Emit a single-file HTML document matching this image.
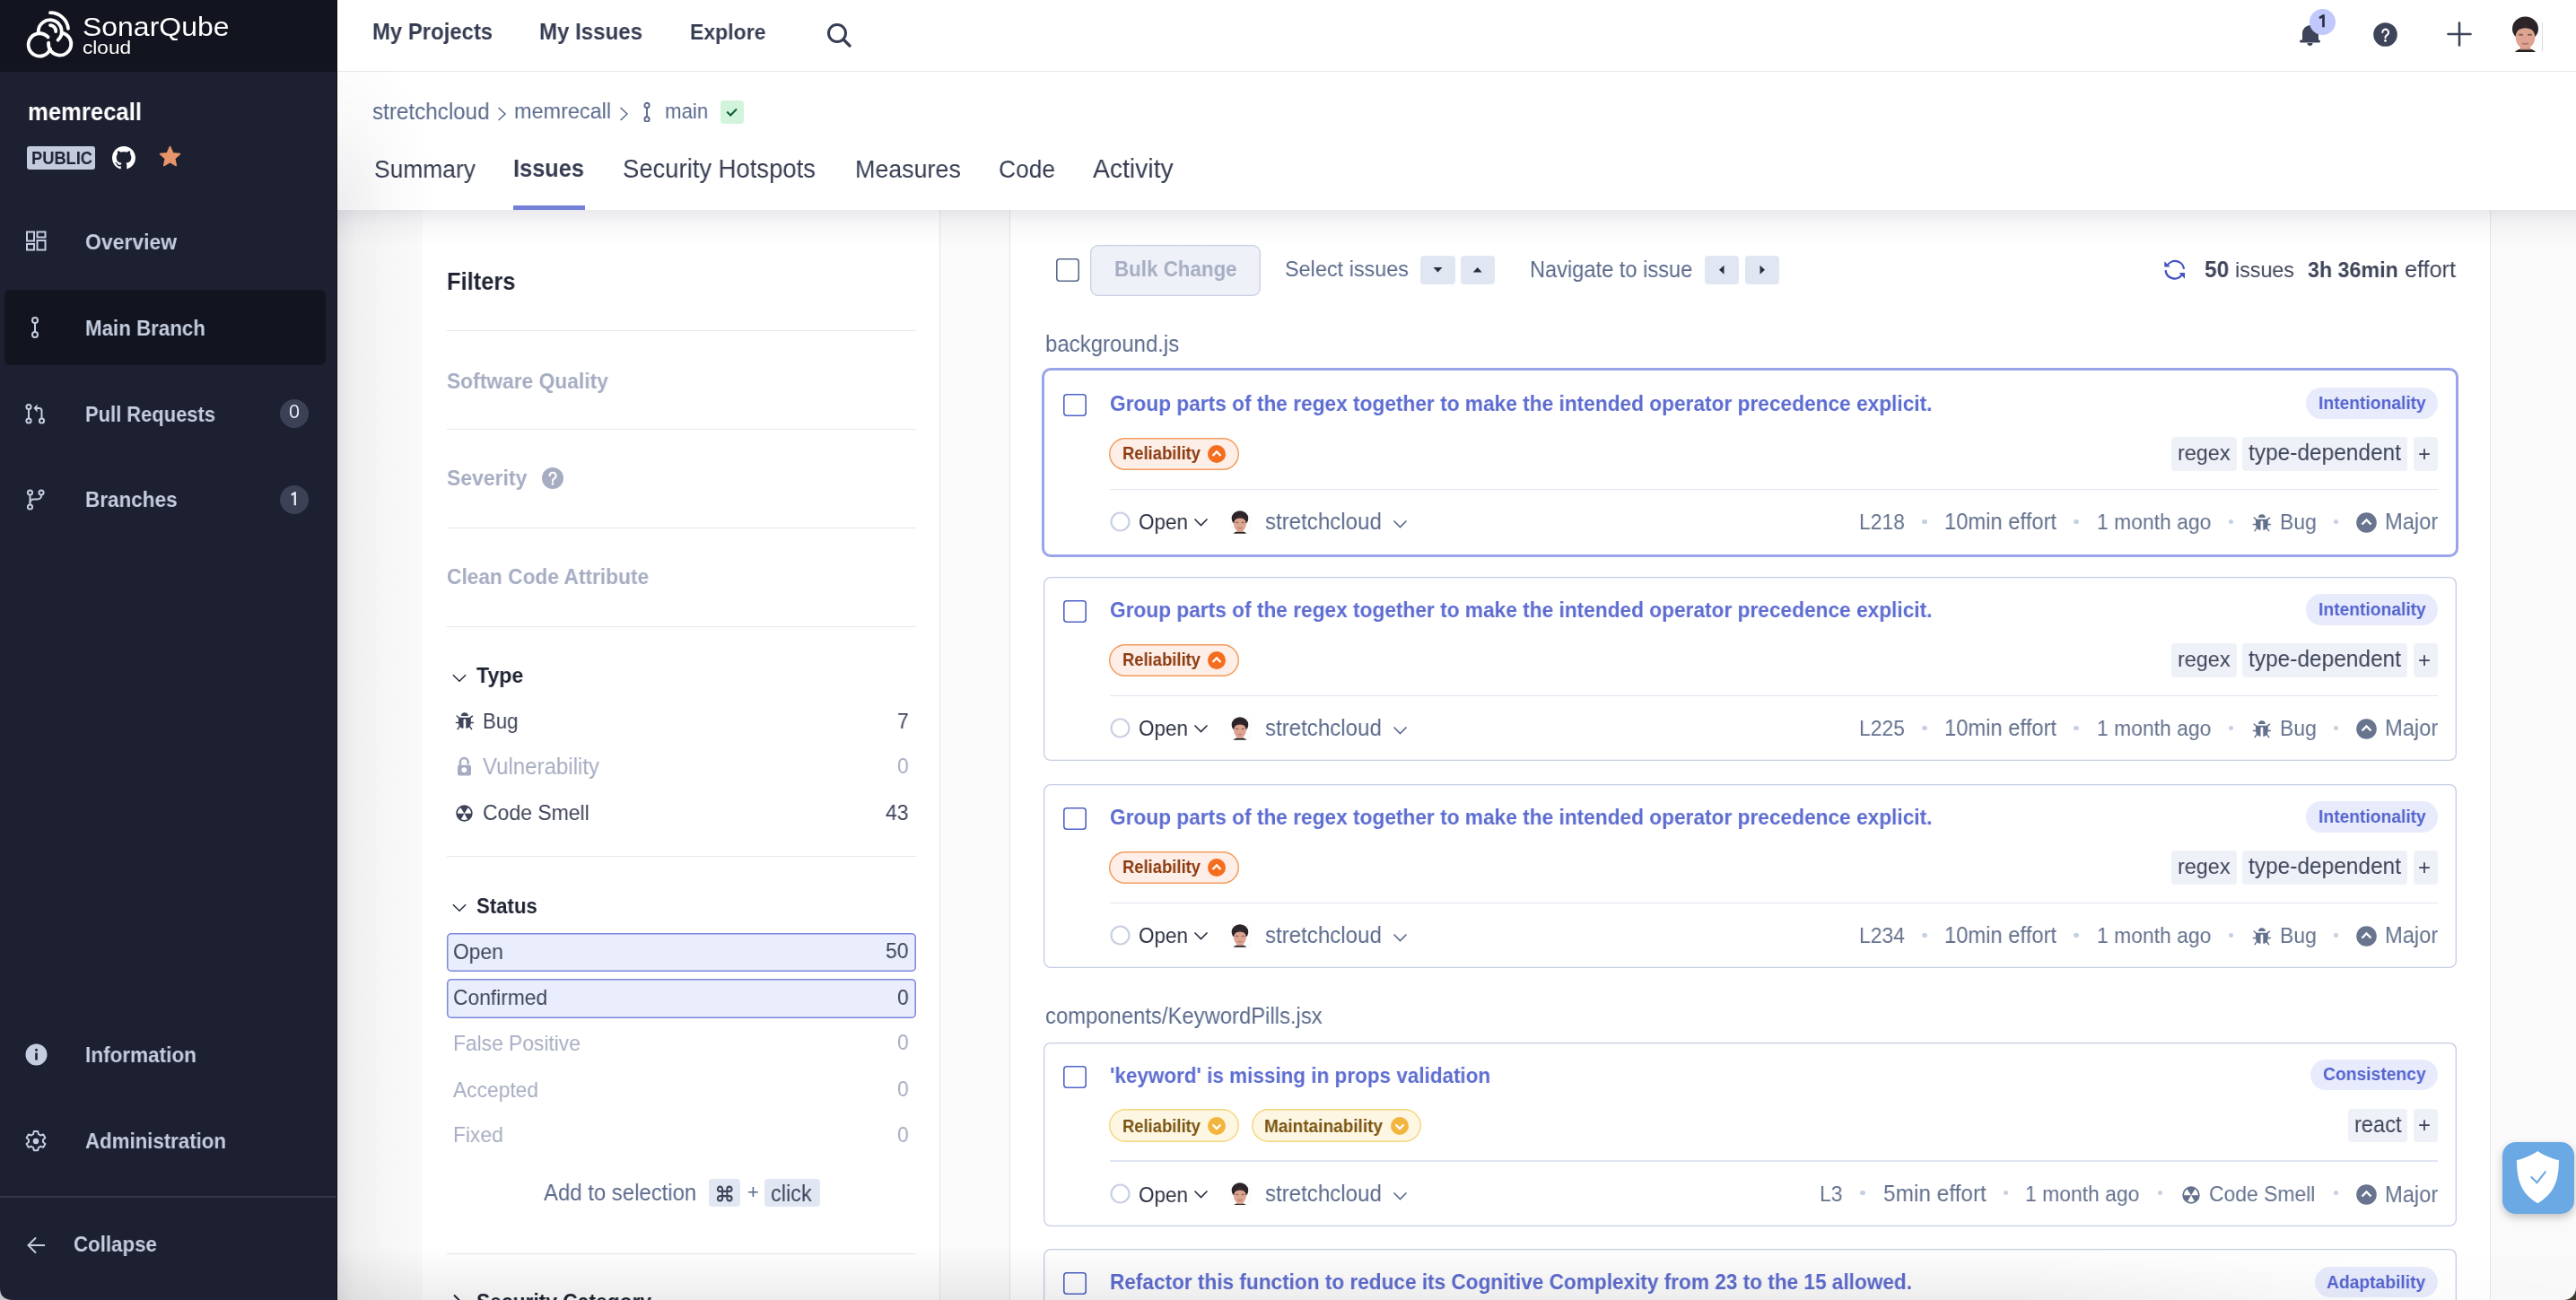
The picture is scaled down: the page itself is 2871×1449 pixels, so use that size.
<!DOCTYPE html>
<html><head><meta charset="utf-8"><style>
html,body{margin:0;padding:0;}
body{width:2871px;height:1449px;position:relative;overflow:hidden;background:#f8f8fa;font-family:"Liberation Sans",sans-serif;}
.t{position:absolute;white-space:nowrap;line-height:1;will-change:transform;}
.b{position:absolute;}
</style></head><body>
<div class="b" style="left:376.00px;top:234.00px;width:2495.00px;height:1215.00px;background:#fafafa;"></div>
<div class="b" style="left:471.00px;top:234.00px;width:576.00px;height:1215.00px;background:#fff;"></div>
<div class="b" style="left:1047.00px;top:234.00px;width:1.00px;height:1215.00px;background:#e1e6f3;"></div>
<div class="b" style="left:1125.00px;top:234.00px;width:1.00px;height:1215.00px;background:#e1e6f3;"></div>
<div class="b" style="left:1126.00px;top:234.00px;width:1649.00px;height:1215.00px;background:#fff;"></div>
<div class="b" style="left:2775.00px;top:234.00px;width:1.00px;height:1215.00px;background:#e1e6f3;"></div>
<div class="b" style="left:376.00px;top:234.00px;width:2495.00px;height:40.00px;background:linear-gradient(to bottom,rgba(10,10,50,0.085),rgba(10,10,50,0.03) 40%,rgba(10,10,50,0));"></div>
<div class="b" style="left:376.00px;top:0.00px;width:2495.00px;height:79.00px;background:#fff;"></div>
<div class="b" style="left:376.00px;top:79.00px;width:2495.00px;height:1.00px;background:#e6e7ea;"></div>
<div class="b" style="left:376.00px;top:80.00px;width:2495.00px;height:154.00px;background:#fff;"></div>
<div class="t" style="left:414.80px;top:22.75px;font-size:25.33px;font-weight:700;color:#363d52;transform:scaleX(0.9434);transform-origin:0.00px 0;">My Projects</div>
<div class="t" style="left:601.00px;top:22.61px;font-size:25.50px;font-weight:700;color:#363d52;transform:scaleX(0.9434);transform-origin:0.00px 0;">My Issues</div>
<div class="t" style="left:768.50px;top:23.54px;font-size:24.41px;font-weight:700;color:#363d52;transform:scaleX(0.9434);transform-origin:0.00px 0;">Explore</div>
<svg class="b" style="left:921.00px;top:25.00px;" width="28.00" height="28.00" viewBox="0 0 28 28"><circle cx="12" cy="12" r="9.5" fill="none" stroke="#363d52" stroke-width="3"/><path d="M19 19 L26 26" stroke="#363d52" stroke-width="3.2" stroke-linecap="round"/></svg>
<svg class="b" style="left:2562.00px;top:24.00px;" width="26.00" height="30.00" viewBox="0 0 26 30"><path d="M4 21 V13 a9 9 0 0 1 18 0 V21 Z" fill="#3e4459"/><rect x="1" y="20.5" width="23" height="3" rx="1.5" fill="#3e4459"/><path d="M9.5 24 h6 a3 3 0 0 1 -6 0z" fill="#3e4459"/></svg>
<div class="b" style="left:2574.00px;top:10.00px;width:29.00px;height:29.00px;background:#c0c8fc;border-radius:50%;"></div>
<svg class="b" style="left:2574.00px;top:10.00px;" width="29.00" height="29.00" viewBox="0 0 29 29"><path d="M11 10.2 L15.5 7.3 V20.2" fill="none" stroke="#2a2f40" stroke-width="2.7" stroke-linejoin="round"/></svg>
<svg class="b" style="left:2644.50px;top:24.80px;" width="27.00" height="27.00" viewBox="0 0 27 27"><circle cx="13.5" cy="13.5" r="13.3" fill="#3e4459"/><path d="M10.3 11 a3.4 3.4 0 1 1 5.3 2.9 c-1.2 .8 -2.1 1.4 -2.1 2.9 v.5" fill="none" stroke="#fff" stroke-width="2.1" stroke-linecap="round"/><circle cx="13.5" cy="20.4" r="1.35" fill="#fff"/></svg>
<svg class="b" style="left:2727.00px;top:24.00px;" width="28.00" height="28.00" viewBox="0 0 28 28"><path d="M14 1.5 V26.5 M1.5 14 H26.5" stroke="#3e4459" stroke-width="2.6" stroke-linecap="round"/></svg>
<svg class="b" style="left:2799.00px;top:18.00px;" width="35.00" height="40.00" viewBox="0 0 35 40"><rect width="35" height="40" fill="#fdfdfd"/><path d="M4 40 Q6 37 11 36.5 L20 36.5 Q25 37 27 40 Z" fill="#222"/><rect x="10" y="31" width="11" height="6.5" fill="#c98f80"/><ellipse cx="15.5" cy="14" rx="14.5" ry="13.5" fill="#2b2428"/><ellipse cx="15.5" cy="23.5" rx="10.8" ry="12.8" fill="#dea391"/><path d="M4.5 21 C4 14 8 10.8 15.5 10.8 C23 10.8 27 14 26.5 21 C25 16 22 13.6 15.5 13.3 C9 13.6 6 16 4.5 21 Z" fill="#2b2428"/><rect x="8" y="19.8" width="5" height="2" rx="1" fill="#7b6650"/><rect x="18" y="19.8" width="5" height="2" rx="1" fill="#7b6650"/><path d="M12 30.3 q3.5 1.5 7 0" stroke="#a87468" stroke-width="1.5" fill="none"/><rect x="34" y="7" width="1" height="32" fill="#dcdcdc"/></svg>
<div class="t" style="left:415.00px;top:111.66px;font-size:25.68px;color:#5b6a8c;transform:scaleX(0.9434);transform-origin:0.00px 0;">stretchcloud</div>
<svg class="b" style="left:553.00px;top:118.50px;" width="12.00" height="16.00" viewBox="0 0 12 16"><path d="M2.6 1 L10 8 L2.6 15" fill="none" stroke="#5b6a8c" stroke-width="1.5"/></svg>
<div class="t" style="left:572.70px;top:112.38px;font-size:24.83px;color:#5b6a8c;transform:scaleX(0.9434);transform-origin:0.00px 0;">memrecall</div>
<svg class="b" style="left:689.00px;top:118.50px;" width="12.00" height="16.00" viewBox="0 0 12 16"><path d="M2.6 1 L10 8 L2.6 15" fill="none" stroke="#5b6a8c" stroke-width="1.5"/></svg>
<svg class="b" style="left:714.00px;top:113.00px;" width="14.00" height="23.00" viewBox="0 0 14 23"><g fill="none" stroke="#5b6a8c" stroke-width="1.9"><circle cx="7" cy="4.4" r="2.6"/><circle cx="7" cy="19.9" r="2.6"/><path d="M7 7 V17.3"/></g></svg>
<div class="t" style="left:740.60px;top:113.39px;font-size:23.64px;color:#5b6a8c;transform:scaleX(0.9434);transform-origin:0.00px 0;">main</div>
<div class="b" style="left:803.00px;top:112.00px;width:25.50px;height:25.60px;background:#d3f4dc;border-radius:4px;"></div>
<svg class="b" style="left:803.00px;top:112.00px;" width="25.50" height="25.60" viewBox="0 0 25.5 25.6"><path d="M7.2 12.6 L11.2 16.5 L18 9.6" fill="none" stroke="#0d6331" stroke-width="2.1"/></svg>
<div class="t" style="left:417.00px;top:174.51px;font-size:27.99px;color:#363d52;transform:scaleX(0.9434);transform-origin:0.00px 0;">Summary</div>
<div class="t" style="left:572.00px;top:175.44px;font-size:26.88px;font-weight:700;color:#363d52;transform:scaleX(0.9434);transform-origin:0.00px 0;">Issues</div>
<div class="t" style="left:694.00px;top:173.58px;font-size:29.09px;color:#363d52;transform:scaleX(0.9434);transform-origin:0.00px 0;">Security Hotspots</div>
<div class="t" style="left:953.00px;top:174.12px;font-size:28.44px;color:#363d52;transform:scaleX(0.9434);transform-origin:0.00px 0;">Measures</div>
<div class="t" style="left:1113.00px;top:174.55px;font-size:27.94px;color:#363d52;transform:scaleX(0.9434);transform-origin:0.00px 0;">Code</div>
<div class="t" style="left:1218.00px;top:172.80px;font-size:30.01px;color:#363d52;transform:scaleX(0.9434);transform-origin:0.00px 0;">Activity</div>
<div class="b" style="left:571.70px;top:229.00px;width:80.30px;height:4.50px;background:#7480d8;"></div>
<div class="b" style="left:0.00px;top:0.00px;width:376.00px;height:80.00px;background:#12151f;"></div>
<div class="b" style="left:0.00px;top:80.00px;width:376.00px;height:1369.00px;background:#1d2030;"></div>
<div class="b" style="left:375.00px;top:0.00px;width:1.00px;height:1449.00px;background:#0b0d14;"></div>
<svg class="b" style="left:25.00px;top:8.00px;" width="65.00" height="62.00" viewBox="0 0 65 62"><g fill="none" stroke="#fff" stroke-width="3.8" stroke-linecap="round"><path d="M28.6 33.4 A12.65 12.65 0 1 0 31 46.6"/><path d="M29.1 39.6 A12.65 12.65 0 1 0 45 28.8"/><path d="M17.8 28.5 A13 13 0 1 1 39.6 36.7"/><path d="M31 20.2 A6.5 6.5 0 0 1 37.2 27.2"/><path d="M31 6.2 A20 20 0 0 1 51 23.8"/></g></svg>
<div class="t" style="left:91.50px;top:14.56px;font-size:29.35px;color:#fff;transform:scaleX(1.0891);transform-origin:0.00px 0;">SonarQube</div>
<div class="t" style="left:91.80px;top:42.82px;font-size:20.17px;color:#fff;transform:scaleX(1.1241);transform-origin:0.00px 0;">cloud</div>
<div class="t" style="left:31.00px;top:111.08px;font-size:27.20px;font-weight:700;color:#fff;transform:scaleX(0.9434);transform-origin:0.00px 0;">memrecall</div>
<div class="b" style="left:30.00px;top:163.00px;width:76.00px;height:26.00px;background:#c3cbdd;border-radius:3px;"></div>
<div class="t" style="left:34.50px;top:166.70px;font-size:19.38px;font-weight:700;color:#1d2030;transform:scaleX(0.9434);transform-origin:0.00px 0;">PUBLIC</div>
<svg class="b" style="left:125.00px;top:163.00px;" width="26.00" height="26.00" viewBox="0 0 16 16"><path fill="#ffffff" d="M8 0C3.58 0 0 3.58 0 8c0 3.54 2.29 6.53 5.47 7.59.4.07.55-.17.55-.38 0-.19-.01-.82-.01-1.49-2.01.37-2.53-.49-2.69-.94-.09-.23-.48-.94-.82-1.13-.28-.15-.68-.52-.01-.53.63-.01 1.08.58 1.23.82.72 1.21 1.87.87 2.33.66.07-.52.28-.87.51-1.07-1.78-.2-3.64-.89-3.64-3.95 0-.87.31-1.59.82-2.15-.08-.2-.36-1.02.08-2.12 0 0 .67-.21 2.2.82.64-.18 1.32-.27 2-.27.68 0 1.36.09 2 .27 1.53-1.04 2.2-.82 2.2-.82.44 1.1.16 1.92.08 2.12.51.56.82 1.27.82 2.15 0 3.07-1.87 3.75-3.65 3.95.29.25.54.73.54 1.48 0 1.07-.01 1.93-.01 2.2 0 .21.15.46.55.38A8.013 8.013 0 0016 8c0-4.42-3.58-8-8-8z"/></svg>
<svg class="b" style="left:177.00px;top:162.00px;" width="25.00" height="25.00" viewBox="0 0 24 24"><path fill="#e8956b" d="M12 1.5 L15.1 8.4 L22.5 9.2 L17 14.2 L18.5 21.6 L12 17.9 L5.5 21.6 L7 14.2 L1.5 9.2 L8.9 8.4Z" stroke="#e8956b" stroke-width="1.5" stroke-linejoin="round"/></svg>
<div class="b" style="left:5.00px;top:323.00px;width:358.00px;height:84.00px;background:#12151f;border-radius:6px;"></div>
<svg class="b" style="left:28.00px;top:257.00px;" width="24.00" height="23.00" viewBox="0 0 24 23"><g fill="none" stroke="#c5cde0" stroke-width="2"><rect x="2" y="1.5" width="8" height="10"/><rect x="13.5" y="1.5" width="9" height="6"/><rect x="2" y="15" width="8" height="6.5"/><rect x="13.5" y="11" width="9" height="10.5"/></g></svg>
<div class="t" style="left:95.00px;top:258.03px;font-size:24.30px;font-weight:700;color:#c5cde0;transform:scaleX(0.9434);transform-origin:0.00px 0;">Overview</div>
<svg class="b" style="left:33.00px;top:353.00px;" width="12.00" height="24.00" viewBox="0 0 12 24"><g fill="none" stroke="#c5cde0" stroke-width="2"><circle cx="6" cy="4" r="3"/><circle cx="6" cy="20" r="3"/><path d="M6 7 V17"/></g></svg>
<div class="t" style="left:95.00px;top:354.56px;font-size:23.67px;font-weight:700;color:#c5cde0;transform:scaleX(0.9434);transform-origin:0.00px 0;">Main Branch</div>
<svg class="b" style="left:27.00px;top:449.00px;" width="26.00" height="25.00" viewBox="0 0 26 25"><g fill="none" stroke="#c5cde0" stroke-width="2"><circle cx="5" cy="4.5" r="2.6"/><circle cx="5" cy="20" r="2.6"/><path d="M5 7.1 V17.4"/><circle cx="19.5" cy="20" r="2.6"/><path d="M19.5 17.4 V9 a3 3 0 0 0 -3 -3 H12.5"/></g><path d="M10.5 6 L14.5 1.5 V10.5Z" fill="#c5cde0"/></svg>
<div class="t" style="left:95.00px;top:450.93px;font-size:23.24px;font-weight:700;color:#c5cde0;transform:scaleX(0.9434);transform-origin:0.00px 0;">Pull Requests</div>
<div class="b" style="left:312.00px;top:445.00px;width:32.00px;height:32.00px;background:#3c4156;border-radius:50%;"></div>
<div class="t" style="left:322.07px;top:449.20px;font-size:21.50px;color:#e6e9f2;">0</div>
<svg class="b" style="left:27.00px;top:544.00px;" width="26.00" height="25.00" viewBox="0 0 26 25"><g fill="none" stroke="#c5cde0" stroke-width="2"><circle cx="6.5" cy="5" r="2.6"/><circle cx="6.5" cy="21" r="2.6"/><path d="M6.5 7.6 V18.4"/><circle cx="19" cy="5" r="2.6"/><path d="M19 7.6 V8.5 a4 4 0 0 1 -4 4 H10.5 a4 4 0 0 0 -4 4"/></g></svg>
<div class="t" style="left:95.00px;top:545.41px;font-size:23.85px;font-weight:700;color:#c5cde0;transform:scaleX(0.9434);transform-origin:0.00px 0;">Branches</div>
<div class="b" style="left:312.00px;top:541.00px;width:32.00px;height:32.00px;background:#3c4156;border-radius:50%;"></div>
<svg class="b" style="left:312.00px;top:541.00px;" width="32.00" height="32.00" viewBox="0 0 32 32"><path d="M12.8 10.8 L16.8 8.2 V22.2" fill="none" stroke="#e6e9f2" stroke-width="2.3" stroke-linejoin="round"/></svg>
<svg class="b" style="left:28.00px;top:1163.00px;" width="25.00" height="25.00" viewBox="0 0 25 25"><circle cx="12.5" cy="12.5" r="12" fill="#c5cde0"/><rect x="11.2" y="10.5" width="2.6" height="8" fill="#1d2030"/><circle cx="12.5" cy="7.3" r="1.5" fill="#1d2030"/></svg>
<div class="t" style="left:95.00px;top:1164.37px;font-size:23.90px;font-weight:700;color:#c5cde0;transform:scaleX(0.9434);transform-origin:0.00px 0;">Information</div>
<svg class="b" style="left:27.00px;top:1259.00px;" width="26.00" height="26.00" viewBox="0 0 24 24"><path fill="none" stroke="#c5cde0" stroke-width="1.8" stroke-linejoin="round" d="M10 1.8 h4 l.7 3 a7.5 7.5 0 0 1 2 1.2 l2.9-1 2 3.5-2.3 2 a7.5 7.5 0 0 1 0 2.3 l2.3 2-2 3.5-2.9-1 a7.5 7.5 0 0 1-2 1.2 l-.7 3 h-4 l-.7-3 a7.5 7.5 0 0 1-2-1.2 l-2.9 1-2-3.5 2.3-2 a7.5 7.5 0 0 1 0-2.3 l-2.3-2 2-3.5 2.9 1 a7.5 7.5 0 0 1 2-1.2z"/><circle cx="12" cy="12" r="3" fill="#c5cde0"/></svg>
<div class="t" style="left:95.00px;top:1260.63px;font-size:23.59px;font-weight:700;color:#c5cde0;transform:scaleX(0.9434);transform-origin:0.00px 0;">Administration</div>
<div class="b" style="left:0.00px;top:1333.00px;width:375.00px;height:1.50px;background:#343849;"></div>
<svg class="b" style="left:29.00px;top:1377.00px;" width="23.00" height="22.00" viewBox="0 0 23 22"><path d="M21 11 H3 M11 2.5 L2.5 11 L11 19.5" fill="none" stroke="#c5cde0" stroke-width="2"/></svg>
<div class="t" style="left:82.00px;top:1375.59px;font-size:23.64px;font-weight:700;color:#c5cde0;transform:scaleX(0.9434);transform-origin:0.00px 0;">Collapse</div>
<div class="t" style="left:497.70px;top:300.78px;font-size:26.96px;font-weight:700;color:#1f2433;transform:scaleX(0.9434);transform-origin:0.00px 0;">Filters</div>
<div class="b" style="left:498.00px;top:368.00px;width:523.00px;height:1.30px;background:#e6e8ef;"></div>
<div class="b" style="left:498.00px;top:478.00px;width:523.00px;height:1.30px;background:#e6e8ef;"></div>
<div class="b" style="left:498.00px;top:588.00px;width:523.00px;height:1.30px;background:#e6e8ef;"></div>
<div class="b" style="left:498.00px;top:698.00px;width:523.00px;height:1.30px;background:#e6e8ef;"></div>
<div class="b" style="left:498.00px;top:954.00px;width:523.00px;height:1.30px;background:#e6e8ef;"></div>
<div class="b" style="left:498.00px;top:1397.00px;width:523.00px;height:1.30px;background:#e6e8ef;"></div>
<div class="t" style="left:497.70px;top:412.55px;font-size:24.16px;font-weight:700;color:#a6adc2;transform:scaleX(0.9434);transform-origin:0.00px 0;">Software Quality</div>
<div class="t" style="left:497.70px;top:521.00px;font-size:24.33px;font-weight:700;color:#a6adc2;transform:scaleX(0.9434);transform-origin:0.00px 0;">Severity</div>
<svg class="b" style="left:604.00px;top:521.00px;" width="24.00" height="24.00" viewBox="0 0 24 24"><circle cx="12" cy="12" r="12" fill="#a6adc2"/><path d="M8.6 9.3 a3.5 3.5 0 1 1 4.9 3.2 c-1 .5 -1.5 1 -1.5 2.3 v.6" fill="none" stroke="#fff" stroke-width="2.1" stroke-linecap="round"/><circle cx="12" cy="18.3" r="1.35" fill="#fff"/></svg>
<div class="t" style="left:497.70px;top:631.22px;font-size:24.08px;font-weight:700;color:#a6adc2;transform:scaleX(0.9434);transform-origin:0.00px 0;">Clean Code Attribute</div>
<svg class="b" style="left:503.50px;top:750.50px;" width="16.00" height="10.00" viewBox="0 0 16 10"><path d="M0.9 1.2 L8 8.3 L15.1 1.2" fill="none" stroke="#252b3d" stroke-width="1.5"/></svg>
<div class="t" style="left:530.70px;top:741.04px;font-size:24.53px;font-weight:700;color:#1f2433;transform:scaleX(0.9434);transform-origin:0.00px 0;">Type</div>
<svg class="b" style="left:507.00px;top:793.00px;" width="21.00" height="21.00" viewBox="0 0 21 21"><g fill="#3e4459"><path d="M7 4.9 A3.9 3.6 0 0 1 14.8 4.9 Z"/><path d="M4 6.8 H17.8 V12 C17.8 16 15.6 18.8 12.3 18.8 V9.6 C12.3 8.8 11.7 8.4 10.9 8.4 C10.1 8.4 9.5 8.8 9.5 9.6 V18.8 C6.2 18.8 4 16 4 12 Z"/></g><g stroke="#3e4459" stroke-width="1.5" fill="none" stroke-linecap="round"><path d="M2.2 5 L4.6 7.2 M19.5 5.2 L17.1 7.2 M1.4 12.6 H4 M17.8 12.6 H20.3 M5.2 16.6 L3.1 19.6 M16.4 16.6 L18.6 19.6"/></g></svg>
<div class="t" style="left:538.00px;top:792.69px;font-size:23.52px;color:#3e4459;transform:scaleX(0.9434);transform-origin:0.00px 0;">Bug</div>
<div class="t" style="left:1000.24px;top:791.96px;font-size:24.38px;color:#3e4459;transform:scaleX(0.9434);transform-origin:0.00px 0;">7</div>
<svg class="b" style="left:509.00px;top:843.00px;" width="17.00" height="22.00" viewBox="0 0 17 22"><path d="M3.9 10 V6.45 A4.4 4.4 0 0 1 12.7 6.45 V7.9" fill="none" stroke="#a6adc2" stroke-width="2.5" stroke-linecap="round"/><rect x="1" y="9.7" width="15" height="11.9" rx="2" fill="#a6adc2"/><circle cx="8.3" cy="15.1" r="2.9" fill="#fff"/></svg>
<div class="t" style="left:538.00px;top:841.54px;font-size:25.47px;color:#a6adc2;transform:scaleX(0.9434);transform-origin:0.00px 0;">Vulnerability</div>
<div class="t" style="left:1000.24px;top:842.46px;font-size:24.38px;color:#a6adc2;transform:scaleX(0.9434);transform-origin:0.00px 0;">0</div>
<svg class="b" style="left:508.00px;top:897.00px;" width="19.00" height="19.00" viewBox="0 0 20 20"><circle cx="10" cy="10" r="8.8" fill="none" stroke="#3e4459" stroke-width="1.8"/><path d="M10 10.3 L5.3 2.9 A8.5 8.5 0 0 1 14.7 2.9Z M10 10.3 L18.5 10.3 A8.5 8.5 0 0 1 14.2 17.6Z M10 10.3 L5.8 17.6 A8.5 8.5 0 0 1 1.5 10.3Z" fill="#3e4459"/></svg>
<div class="t" style="left:538.00px;top:893.58px;font-size:24.36px;color:#3e4459;transform:scaleX(0.9434);transform-origin:0.00px 0;">Code Smell</div>
<div class="t" style="left:987.47px;top:893.56px;font-size:24.38px;color:#3e4459;transform:scaleX(0.9434);transform-origin:0.00px 0;">43</div>
<svg class="b" style="left:503.50px;top:1007.00px;" width="16.00" height="10.00" viewBox="0 0 16 10"><path d="M0.9 1.2 L8 8.3 L15.1 1.2" fill="none" stroke="#252b3d" stroke-width="1.5"/></svg>
<div class="t" style="left:530.50px;top:998.69px;font-size:23.52px;font-weight:700;color:#1f2433;transform:scaleX(0.9434);transform-origin:0.00px 0;">Status</div>
<div class="b" style="left:498.00px;top:1039.50px;width:523.00px;height:43.50px;background:#eaedfc;box-shadow:inset 0 0 0 1.5px #7d87da;border-radius:5px;"></div>
<div class="t" style="left:505.00px;top:1048.54px;font-size:24.17px;color:#3e4459;transform:scaleX(0.9434);transform-origin:0.00px 0;">Open</div>
<div class="t" style="left:987.47px;top:1048.36px;font-size:24.38px;color:#3e4459;transform:scaleX(0.9434);transform-origin:0.00px 0;">50</div>
<div class="b" style="left:498.00px;top:1091.00px;width:523.00px;height:43.50px;background:#eaedfc;box-shadow:inset 0 0 0 1.5px #7d87da;border-radius:5px;"></div>
<div class="t" style="left:505.00px;top:1099.74px;font-size:24.17px;color:#3e4459;transform:scaleX(0.9434);transform-origin:0.00px 0;">Confirmed</div>
<div class="t" style="left:1000.24px;top:1099.56px;font-size:24.38px;color:#3e4459;transform:scaleX(0.9434);transform-origin:0.00px 0;">0</div>
<div class="t" style="left:505.00px;top:1150.64px;font-size:24.17px;color:#a6adc2;transform:scaleX(0.9434);transform-origin:0.00px 0;">False Positive</div>
<div class="t" style="left:1000.24px;top:1150.46px;font-size:24.38px;color:#a6adc2;transform:scaleX(0.9434);transform-origin:0.00px 0;">0</div>
<div class="t" style="left:505.00px;top:1202.54px;font-size:24.17px;color:#a6adc2;transform:scaleX(0.9434);transform-origin:0.00px 0;">Accepted</div>
<div class="t" style="left:1000.24px;top:1202.36px;font-size:24.38px;color:#a6adc2;transform:scaleX(0.9434);transform-origin:0.00px 0;">0</div>
<div class="t" style="left:505.00px;top:1253.44px;font-size:24.17px;color:#a6adc2;transform:scaleX(0.9434);transform-origin:0.00px 0;">Fixed</div>
<div class="t" style="left:1000.24px;top:1253.26px;font-size:24.38px;color:#a6adc2;transform:scaleX(0.9434);transform-origin:0.00px 0;">0</div>
<div class="t" style="left:605.50px;top:1317.12px;font-size:25.37px;color:#5b6a8c;transform:scaleX(0.9434);transform-origin:0.00px 0;">Add to selection</div>
<div class="b" style="left:790.00px;top:1313.70px;width:34.50px;height:31.70px;background:#e1e6f3;border-radius:4px;"></div>
<svg class="b" style="left:796.50px;top:1319.50px;overflow:visible;" width="21.50" height="21.00" viewBox="0 0 24 24"><path d="M15 6v12a3 3 0 1 0 3-3H6a3 3 0 1 0 3 3V6a3 3 0 1 0-3 3h12a3 3 0 1 0-3-3" fill="none" stroke="#3e4459" stroke-width="2.3"/></svg>
<div class="t" style="left:833.00px;top:1317.98px;font-size:22.00px;color:#5b6a8c;">+</div>
<div class="b" style="left:852.00px;top:1313.70px;width:61.60px;height:31.70px;background:#e1e6f3;border-radius:4px;"></div>
<div class="t" style="left:859.00px;top:1317.51px;font-size:24.91px;color:#3e4459;transform:scaleX(0.9434);transform-origin:0.00px 0;">click</div>
<svg class="b" style="left:504.00px;top:1442.00px;" width="11.00" height="16.00" viewBox="0 0 11 16"><path d="M2 1.5 L8.5 8 L2 14.5" fill="none" stroke="#1f2433" stroke-width="2"/></svg>
<div class="t" style="left:530.50px;top:1439.44px;font-size:24.17px;font-weight:700;color:#1f2433;transform:scaleX(0.9434);transform-origin:0.00px 0;">Security Category</div>
<div class="b" style="left:1177.00px;top:288.20px;width:25.80px;height:25.80px;box-shadow:inset 0 0 0 1.6px #5b6a8c;border-radius:4px;background:#fff;"></div>
<div class="b" style="left:1215.40px;top:272.50px;width:189.40px;height:57.30px;background:#eff1f9;box-shadow:inset 0 0 0 1.3px #c8cfe4;border-radius:9px;"></div>
<div class="t" style="left:1242.00px;top:289.34px;font-size:23.70px;font-weight:700;color:#a6adc2;transform:scaleX(0.9434);transform-origin:0.00px 0;">Bulk Change</div>
<div class="t" style="left:1431.70px;top:288.38px;font-size:24.84px;color:#5b6a8c;transform:scaleX(0.9434);transform-origin:0.00px 0;">Select issues</div>
<div class="b" style="left:1583.00px;top:285.40px;width:39.00px;height:31.50px;background:#e1e6f3;border-radius:4px;"></div>
<svg class="b" style="left:1583.00px;top:285.40px;" width="39.00" height="31.50" viewBox="0 0 39 31.5"><path d="M14.5 13 H24.5 L19.5 18.5Z" fill="#2a2f40"/></svg>
<div class="b" style="left:1628.40px;top:285.40px;width:37.40px;height:31.50px;background:#e1e6f3;border-radius:4px;"></div>
<svg class="b" style="left:1628.40px;top:285.40px;" width="37.40" height="31.50" viewBox="0 0 37.4 31.5"><path d="M13.7 18.5 H23.7 L18.7 13Z" fill="#2a2f40"/></svg>
<div class="t" style="left:1705.00px;top:288.19px;font-size:25.06px;color:#5b6a8c;transform:scaleX(0.9434);transform-origin:0.00px 0;">Navigate to issue</div>
<div class="b" style="left:1900.00px;top:285.40px;width:37.60px;height:31.50px;background:#e1e6f3;border-radius:4px;"></div>
<svg class="b" style="left:1900.00px;top:285.40px;" width="37.60" height="31.50" viewBox="0 0 37.6 31.5"><path d="M21.5 10.7 V20.7 L16 15.7Z" fill="#2a2f40"/></svg>
<div class="b" style="left:1945.30px;top:285.40px;width:37.70px;height:31.50px;background:#e1e6f3;border-radius:4px;"></div>
<svg class="b" style="left:1945.30px;top:285.40px;" width="37.70" height="31.50" viewBox="0 0 37.7 31.5"><path d="M16.5 10.7 V20.7 L22 15.7Z" fill="#2a2f40"/></svg>
<svg class="b" style="left:2405.00px;top:283.00px;" width="40.00" height="37.00" viewBox="0 0 40 37"><g fill="none" stroke="#4353c4" stroke-width="2.3"><path d="M29.1 16.8 A10 10 0 0 0 10.4 13.2"/><path d="M8.6 18.2 A10 10 0 0 0 26.8 23.2"/></g><path d="M7.3 8.2 L7.3 14.4 L13.7 14.4Z M30 20.9 L30 27.7 L23.7 20.9Z" fill="#4353c4"/></svg>
<div class="t" style="left:2456.50px;top:287.99px;font-size:25.88px;font-weight:700;color:#3e4459;transform:scaleX(0.9434);transform-origin:0.00px 0;">50</div>
<div class="t" style="left:2491.00px;top:289.01px;font-size:24.68px;color:#3e4459;transform:scaleX(0.9434);transform-origin:0.00px 0;">issues</div>
<div class="t" style="left:2571.50px;top:289.04px;font-size:24.65px;font-weight:700;color:#3e4459;transform:scaleX(0.9434);transform-origin:0.00px 0;">3h 36min</div>
<div class="t" style="left:2679.70px;top:287.31px;font-size:26.69px;color:#3e4459;transform:scaleX(0.9434);transform-origin:0.00px 0;">effort</div>
<div class="t" style="left:1164.70px;top:371.09px;font-size:25.41px;color:#5b6a8c;transform:scaleX(0.9434);transform-origin:0.00px 0;">background.js</div>
<div class="t" style="left:1164.80px;top:1119.70px;font-size:25.28px;color:#5b6a8c;transform:scaleX(0.9434);transform-origin:0.00px 0;">components/KeywordPills.jsx</div>
<div class="b" style="left:1161.00px;top:410.00px;width:1579.00px;height:210.50px;border:3px solid #99a4e9;border-radius:10px;box-sizing:border-box;background:#fff;"></div>
<div class="b" style="left:1185.00px;top:439.00px;width:26.00px;height:25.00px;box-shadow:inset 0 0 0 1.6px #5062c8;border-radius:4px;"></div>
<div class="t" style="left:1236.70px;top:438.24px;font-size:24.05px;font-weight:700;color:#5d6cd0;transform:scaleX(0.9434);transform-origin:0.00px 0;">Group parts of the regex together to make the intended operator precedence explicit.</div>
<div class="b" style="left:2569.50px;top:432.20px;width:147.50px;height:34.50px;background:#e8ebfc;border-radius:17px;"></div>
<div class="t" style="left:2583.90px;top:439.02px;font-size:20.42px;font-weight:700;color:#5464cf;transform:scaleX(0.9434);transform-origin:0.00px 0;">Intentionality</div>
<div class="b" style="left:1236.20px;top:487.60px;width:144.40px;height:36.50px;background:#fdefe8;box-shadow:inset 0 0 0 1.4px #f59b5c;border-radius:19px;"></div>
<div class="t" style="left:1250.70px;top:495.88px;font-size:19.52px;font-weight:700;color:#8b3a0e;transform:scaleX(0.9434);transform-origin:0.00px 0;">Reliability</div>
<svg class="b" style="left:1346.10px;top:495.80px;" width="20.00" height="20.00" viewBox="0 0 20 20"><circle cx="10" cy="10" r="10" fill="#f56d1e"/><path d="M5.5 12 L10 7.5 L14.5 12" fill="none" stroke="#fff" stroke-width="2.3"/></svg>
<div class="b" style="left:2420.00px;top:487.40px;width:73.00px;height:37.20px;background:#eef1f8;border-radius:4px;"></div>
<div class="t" style="left:2427.00px;top:492.60px;font-size:24.80px;color:#3e4459;transform:scaleX(0.9434);transform-origin:0.00px 0;">regex</div>
<div class="b" style="left:2499.30px;top:487.40px;width:183.70px;height:37.20px;background:#eef1f8;border-radius:4px;"></div>
<div class="t" style="left:2506.30px;top:491.65px;font-size:25.93px;color:#3e4459;transform:scaleX(0.9434);transform-origin:0.00px 0;">type-dependent</div>
<div class="b" style="left:2690.00px;top:487.40px;width:27.00px;height:37.20px;background:#eef1f8;border-radius:4px;"></div>
<div class="t" style="left:2695.16px;top:493.78px;font-size:24.00px;color:#3e4459;">+</div>
<div class="b" style="left:1236.50px;top:544.50px;width:1480.50px;height:1.50px;background:#e1e6f3;"></div>
<svg class="b" style="left:1237.00px;top:570.00px;" width="23.00" height="23.00" viewBox="0 0 23 23"><circle cx="11.5" cy="11.5" r="10" fill="none" stroke="#c8d0e2" stroke-width="2.2"/></svg>
<div class="t" style="left:1269.30px;top:570.25px;font-size:23.80px;color:#2a2f40;transform:scaleX(0.9434);transform-origin:0.00px 0;">Open</div>
<svg class="b" style="left:1330.00px;top:577.00px;" width="17.00" height="10.00" viewBox="0 0 17 10"><path d="M1.5 1.5 L8.5 8.5 L15.5 1.5" fill="none" stroke="#2a2f40" stroke-width="1.6"/></svg>
<svg class="b" style="left:1371.50px;top:569.00px;" width="22.50" height="25.70" viewBox="0 0 35 40"><rect width="35" height="40" fill="#fdfdfd"/><path d="M4 40 Q6 37 11 36.5 L20 36.5 Q25 37 27 40 Z" fill="#222"/><rect x="10" y="31" width="11" height="6.5" fill="#c98f80"/><ellipse cx="15.5" cy="14" rx="14.5" ry="13.5" fill="#2b2428"/><ellipse cx="15.5" cy="23.5" rx="10.8" ry="12.8" fill="#dea391"/><path d="M4.5 21 C4 14 8 10.8 15.5 10.8 C23 10.8 27 14 26.5 21 C25 16 22 13.6 15.5 13.3 C9 13.6 6 16 4.5 21 Z" fill="#2b2428"/><rect x="8" y="19.8" width="5" height="2" rx="1" fill="#7b6650"/><rect x="18" y="19.8" width="5" height="2" rx="1" fill="#7b6650"/><path d="M12 30.3 q3.5 1.5 7 0" stroke="#a87468" stroke-width="1.5" fill="none"/><rect x="34" y="7" width="1" height="32" fill="#dcdcdc"/></svg>
<div class="t" style="left:1409.70px;top:568.79px;font-size:25.53px;color:#5b6a8c;transform:scaleX(0.9434);transform-origin:0.00px 0;">stretchcloud</div>
<svg class="b" style="left:1552.00px;top:579.00px;" width="17.00" height="10.00" viewBox="0 0 17 10"><path d="M1.5 1.5 L8.5 8.5 L15.5 1.5" fill="none" stroke="#5b6a8c" stroke-width="1.6"/></svg>
<div class="t" style="left:2072.05px;top:569.85px;font-size:24.27px;color:#64718d;transform:scaleX(0.9434);transform-origin:0.00px 0;">L218</div>
<div class="t" style="left:2167.00px;top:569.08px;font-size:25.19px;color:#64718d;transform:scaleX(0.9434);transform-origin:0.00px 0;">10min effort</div>
<div class="t" style="left:2336.60px;top:569.84px;font-size:24.29px;color:#64718d;transform:scaleX(0.9434);transform-origin:0.00px 0;">1 month ago</div>
<div class="b" style="left:2142.40px;top:578.50px;width:5.20px;height:5.20px;background:#c6d0e4;border-radius:50%;"></div>
<div class="b" style="left:2311.40px;top:578.50px;width:5.20px;height:5.20px;background:#c6d0e4;border-radius:50%;"></div>
<div class="b" style="left:2483.70px;top:578.50px;width:5.20px;height:5.20px;background:#c6d0e4;border-radius:50%;"></div>
<div class="b" style="left:2600.90px;top:578.50px;width:5.20px;height:5.20px;background:#c6d0e4;border-radius:50%;"></div>
<svg class="b" style="left:2510.00px;top:572.00px;" width="21.00" height="21.00" viewBox="0 0 21 21"><g fill="#64718d"><path d="M7 4.9 A3.9 3.6 0 0 1 14.8 4.9 Z"/><path d="M4 6.8 H17.8 V12 C17.8 16 15.6 18.8 12.3 18.8 V9.6 C12.3 8.8 11.7 8.4 10.9 8.4 C10.1 8.4 9.5 8.8 9.5 9.6 V18.8 C6.2 18.8 4 16 4 12 Z"/></g><g stroke="#64718d" stroke-width="1.5" fill="none" stroke-linecap="round"><path d="M2.2 5 L4.6 7.2 M19.5 5.2 L17.1 7.2 M1.4 12.6 H4 M17.8 12.6 H20.3 M5.2 16.6 L3.1 19.6 M16.4 16.6 L18.6 19.6"/></g></svg>
<div class="t" style="left:2541.00px;top:569.85px;font-size:24.27px;color:#64718d;transform:scaleX(0.9434);transform-origin:0.00px 0;">Bug</div>
<svg class="b" style="left:2626.00px;top:571.00px;" width="23.00" height="23.00" viewBox="0 0 23 23"><circle cx="11.5" cy="11.5" r="11.3" fill="#69758f"/><path d="M6.5 13.5 L11.5 8.5 L16.5 13.5" fill="none" stroke="#fff" stroke-width="2.4"/></svg>
<div class="t" style="left:2657.80px;top:569.15px;font-size:25.10px;color:#64718d;transform:scaleX(0.9434);transform-origin:0.00px 0;">Major</div>
<div class="b" style="left:1163.00px;top:643.00px;width:1574.50px;height:205.00px;box-shadow:inset 0 0 0 1.3px #c6cde5;border-radius:8px;background:#fff;"></div>
<div class="b" style="left:1185.00px;top:669.00px;width:26.00px;height:25.00px;box-shadow:inset 0 0 0 1.6px #5062c8;border-radius:4px;"></div>
<div class="t" style="left:1236.70px;top:668.24px;font-size:24.05px;font-weight:700;color:#5d6cd0;transform:scaleX(0.9434);transform-origin:0.00px 0;">Group parts of the regex together to make the intended operator precedence explicit.</div>
<div class="b" style="left:2569.50px;top:662.20px;width:147.50px;height:34.50px;background:#e8ebfc;border-radius:17px;"></div>
<div class="t" style="left:2583.90px;top:669.02px;font-size:20.42px;font-weight:700;color:#5464cf;transform:scaleX(0.9434);transform-origin:0.00px 0;">Intentionality</div>
<div class="b" style="left:1236.20px;top:717.60px;width:144.40px;height:36.50px;background:#fdefe8;box-shadow:inset 0 0 0 1.4px #f59b5c;border-radius:19px;"></div>
<div class="t" style="left:1250.70px;top:725.88px;font-size:19.52px;font-weight:700;color:#8b3a0e;transform:scaleX(0.9434);transform-origin:0.00px 0;">Reliability</div>
<svg class="b" style="left:1346.10px;top:725.80px;" width="20.00" height="20.00" viewBox="0 0 20 20"><circle cx="10" cy="10" r="10" fill="#f56d1e"/><path d="M5.5 12 L10 7.5 L14.5 12" fill="none" stroke="#fff" stroke-width="2.3"/></svg>
<div class="b" style="left:2420.00px;top:717.40px;width:73.00px;height:37.20px;background:#eef1f8;border-radius:4px;"></div>
<div class="t" style="left:2427.00px;top:722.60px;font-size:24.80px;color:#3e4459;transform:scaleX(0.9434);transform-origin:0.00px 0;">regex</div>
<div class="b" style="left:2499.30px;top:717.40px;width:183.70px;height:37.20px;background:#eef1f8;border-radius:4px;"></div>
<div class="t" style="left:2506.30px;top:721.65px;font-size:25.93px;color:#3e4459;transform:scaleX(0.9434);transform-origin:0.00px 0;">type-dependent</div>
<div class="b" style="left:2690.00px;top:717.40px;width:27.00px;height:37.20px;background:#eef1f8;border-radius:4px;"></div>
<div class="t" style="left:2695.16px;top:723.78px;font-size:24.00px;color:#3e4459;">+</div>
<div class="b" style="left:1236.50px;top:774.50px;width:1480.50px;height:1.50px;background:#e1e6f3;"></div>
<svg class="b" style="left:1237.00px;top:800.00px;" width="23.00" height="23.00" viewBox="0 0 23 23"><circle cx="11.5" cy="11.5" r="10" fill="none" stroke="#c8d0e2" stroke-width="2.2"/></svg>
<div class="t" style="left:1269.30px;top:800.25px;font-size:23.80px;color:#2a2f40;transform:scaleX(0.9434);transform-origin:0.00px 0;">Open</div>
<svg class="b" style="left:1330.00px;top:807.00px;" width="17.00" height="10.00" viewBox="0 0 17 10"><path d="M1.5 1.5 L8.5 8.5 L15.5 1.5" fill="none" stroke="#2a2f40" stroke-width="1.6"/></svg>
<svg class="b" style="left:1371.50px;top:799.00px;" width="22.50" height="25.70" viewBox="0 0 35 40"><rect width="35" height="40" fill="#fdfdfd"/><path d="M4 40 Q6 37 11 36.5 L20 36.5 Q25 37 27 40 Z" fill="#222"/><rect x="10" y="31" width="11" height="6.5" fill="#c98f80"/><ellipse cx="15.5" cy="14" rx="14.5" ry="13.5" fill="#2b2428"/><ellipse cx="15.5" cy="23.5" rx="10.8" ry="12.8" fill="#dea391"/><path d="M4.5 21 C4 14 8 10.8 15.5 10.8 C23 10.8 27 14 26.5 21 C25 16 22 13.6 15.5 13.3 C9 13.6 6 16 4.5 21 Z" fill="#2b2428"/><rect x="8" y="19.8" width="5" height="2" rx="1" fill="#7b6650"/><rect x="18" y="19.8" width="5" height="2" rx="1" fill="#7b6650"/><path d="M12 30.3 q3.5 1.5 7 0" stroke="#a87468" stroke-width="1.5" fill="none"/><rect x="34" y="7" width="1" height="32" fill="#dcdcdc"/></svg>
<div class="t" style="left:1409.70px;top:798.79px;font-size:25.53px;color:#5b6a8c;transform:scaleX(0.9434);transform-origin:0.00px 0;">stretchcloud</div>
<svg class="b" style="left:1552.00px;top:809.00px;" width="17.00" height="10.00" viewBox="0 0 17 10"><path d="M1.5 1.5 L8.5 8.5 L15.5 1.5" fill="none" stroke="#5b6a8c" stroke-width="1.6"/></svg>
<div class="t" style="left:2072.05px;top:799.85px;font-size:24.27px;color:#64718d;transform:scaleX(0.9434);transform-origin:0.00px 0;">L225</div>
<div class="t" style="left:2167.00px;top:799.08px;font-size:25.19px;color:#64718d;transform:scaleX(0.9434);transform-origin:0.00px 0;">10min effort</div>
<div class="t" style="left:2336.60px;top:799.84px;font-size:24.29px;color:#64718d;transform:scaleX(0.9434);transform-origin:0.00px 0;">1 month ago</div>
<div class="b" style="left:2142.40px;top:808.50px;width:5.20px;height:5.20px;background:#c6d0e4;border-radius:50%;"></div>
<div class="b" style="left:2311.40px;top:808.50px;width:5.20px;height:5.20px;background:#c6d0e4;border-radius:50%;"></div>
<div class="b" style="left:2483.70px;top:808.50px;width:5.20px;height:5.20px;background:#c6d0e4;border-radius:50%;"></div>
<div class="b" style="left:2600.90px;top:808.50px;width:5.20px;height:5.20px;background:#c6d0e4;border-radius:50%;"></div>
<svg class="b" style="left:2510.00px;top:802.00px;" width="21.00" height="21.00" viewBox="0 0 21 21"><g fill="#64718d"><path d="M7 4.9 A3.9 3.6 0 0 1 14.8 4.9 Z"/><path d="M4 6.8 H17.8 V12 C17.8 16 15.6 18.8 12.3 18.8 V9.6 C12.3 8.8 11.7 8.4 10.9 8.4 C10.1 8.4 9.5 8.8 9.5 9.6 V18.8 C6.2 18.8 4 16 4 12 Z"/></g><g stroke="#64718d" stroke-width="1.5" fill="none" stroke-linecap="round"><path d="M2.2 5 L4.6 7.2 M19.5 5.2 L17.1 7.2 M1.4 12.6 H4 M17.8 12.6 H20.3 M5.2 16.6 L3.1 19.6 M16.4 16.6 L18.6 19.6"/></g></svg>
<div class="t" style="left:2541.00px;top:799.85px;font-size:24.27px;color:#64718d;transform:scaleX(0.9434);transform-origin:0.00px 0;">Bug</div>
<svg class="b" style="left:2626.00px;top:801.00px;" width="23.00" height="23.00" viewBox="0 0 23 23"><circle cx="11.5" cy="11.5" r="11.3" fill="#69758f"/><path d="M6.5 13.5 L11.5 8.5 L16.5 13.5" fill="none" stroke="#fff" stroke-width="2.4"/></svg>
<div class="t" style="left:2657.80px;top:799.15px;font-size:25.10px;color:#64718d;transform:scaleX(0.9434);transform-origin:0.00px 0;">Major</div>
<div class="b" style="left:1163.00px;top:874.00px;width:1574.50px;height:205.00px;box-shadow:inset 0 0 0 1.3px #c6cde5;border-radius:8px;background:#fff;"></div>
<div class="b" style="left:1185.00px;top:900.00px;width:26.00px;height:25.00px;box-shadow:inset 0 0 0 1.6px #5062c8;border-radius:4px;"></div>
<div class="t" style="left:1236.70px;top:899.24px;font-size:24.05px;font-weight:700;color:#5d6cd0;transform:scaleX(0.9434);transform-origin:0.00px 0;">Group parts of the regex together to make the intended operator precedence explicit.</div>
<div class="b" style="left:2569.50px;top:893.20px;width:147.50px;height:34.50px;background:#e8ebfc;border-radius:17px;"></div>
<div class="t" style="left:2583.90px;top:900.02px;font-size:20.42px;font-weight:700;color:#5464cf;transform:scaleX(0.9434);transform-origin:0.00px 0;">Intentionality</div>
<div class="b" style="left:1236.20px;top:948.60px;width:144.40px;height:36.50px;background:#fdefe8;box-shadow:inset 0 0 0 1.4px #f59b5c;border-radius:19px;"></div>
<div class="t" style="left:1250.70px;top:956.88px;font-size:19.52px;font-weight:700;color:#8b3a0e;transform:scaleX(0.9434);transform-origin:0.00px 0;">Reliability</div>
<svg class="b" style="left:1346.10px;top:956.80px;" width="20.00" height="20.00" viewBox="0 0 20 20"><circle cx="10" cy="10" r="10" fill="#f56d1e"/><path d="M5.5 12 L10 7.5 L14.5 12" fill="none" stroke="#fff" stroke-width="2.3"/></svg>
<div class="b" style="left:2420.00px;top:948.40px;width:73.00px;height:37.20px;background:#eef1f8;border-radius:4px;"></div>
<div class="t" style="left:2427.00px;top:953.60px;font-size:24.80px;color:#3e4459;transform:scaleX(0.9434);transform-origin:0.00px 0;">regex</div>
<div class="b" style="left:2499.30px;top:948.40px;width:183.70px;height:37.20px;background:#eef1f8;border-radius:4px;"></div>
<div class="t" style="left:2506.30px;top:952.65px;font-size:25.93px;color:#3e4459;transform:scaleX(0.9434);transform-origin:0.00px 0;">type-dependent</div>
<div class="b" style="left:2690.00px;top:948.40px;width:27.00px;height:37.20px;background:#eef1f8;border-radius:4px;"></div>
<div class="t" style="left:2695.16px;top:954.78px;font-size:24.00px;color:#3e4459;">+</div>
<div class="b" style="left:1236.50px;top:1005.50px;width:1480.50px;height:1.50px;background:#e1e6f3;"></div>
<svg class="b" style="left:1237.00px;top:1031.00px;" width="23.00" height="23.00" viewBox="0 0 23 23"><circle cx="11.5" cy="11.5" r="10" fill="none" stroke="#c8d0e2" stroke-width="2.2"/></svg>
<div class="t" style="left:1269.30px;top:1031.25px;font-size:23.80px;color:#2a2f40;transform:scaleX(0.9434);transform-origin:0.00px 0;">Open</div>
<svg class="b" style="left:1330.00px;top:1038.00px;" width="17.00" height="10.00" viewBox="0 0 17 10"><path d="M1.5 1.5 L8.5 8.5 L15.5 1.5" fill="none" stroke="#2a2f40" stroke-width="1.6"/></svg>
<svg class="b" style="left:1371.50px;top:1030.00px;" width="22.50" height="25.70" viewBox="0 0 35 40"><rect width="35" height="40" fill="#fdfdfd"/><path d="M4 40 Q6 37 11 36.5 L20 36.5 Q25 37 27 40 Z" fill="#222"/><rect x="10" y="31" width="11" height="6.5" fill="#c98f80"/><ellipse cx="15.5" cy="14" rx="14.5" ry="13.5" fill="#2b2428"/><ellipse cx="15.5" cy="23.5" rx="10.8" ry="12.8" fill="#dea391"/><path d="M4.5 21 C4 14 8 10.8 15.5 10.8 C23 10.8 27 14 26.5 21 C25 16 22 13.6 15.5 13.3 C9 13.6 6 16 4.5 21 Z" fill="#2b2428"/><rect x="8" y="19.8" width="5" height="2" rx="1" fill="#7b6650"/><rect x="18" y="19.8" width="5" height="2" rx="1" fill="#7b6650"/><path d="M12 30.3 q3.5 1.5 7 0" stroke="#a87468" stroke-width="1.5" fill="none"/><rect x="34" y="7" width="1" height="32" fill="#dcdcdc"/></svg>
<div class="t" style="left:1409.70px;top:1029.79px;font-size:25.53px;color:#5b6a8c;transform:scaleX(0.9434);transform-origin:0.00px 0;">stretchcloud</div>
<svg class="b" style="left:1552.00px;top:1040.00px;" width="17.00" height="10.00" viewBox="0 0 17 10"><path d="M1.5 1.5 L8.5 8.5 L15.5 1.5" fill="none" stroke="#5b6a8c" stroke-width="1.6"/></svg>
<div class="t" style="left:2072.05px;top:1030.85px;font-size:24.27px;color:#64718d;transform:scaleX(0.9434);transform-origin:0.00px 0;">L234</div>
<div class="t" style="left:2167.00px;top:1030.08px;font-size:25.19px;color:#64718d;transform:scaleX(0.9434);transform-origin:0.00px 0;">10min effort</div>
<div class="t" style="left:2336.60px;top:1030.84px;font-size:24.29px;color:#64718d;transform:scaleX(0.9434);transform-origin:0.00px 0;">1 month ago</div>
<div class="b" style="left:2142.40px;top:1039.50px;width:5.20px;height:5.20px;background:#c6d0e4;border-radius:50%;"></div>
<div class="b" style="left:2311.40px;top:1039.50px;width:5.20px;height:5.20px;background:#c6d0e4;border-radius:50%;"></div>
<div class="b" style="left:2483.70px;top:1039.50px;width:5.20px;height:5.20px;background:#c6d0e4;border-radius:50%;"></div>
<div class="b" style="left:2600.90px;top:1039.50px;width:5.20px;height:5.20px;background:#c6d0e4;border-radius:50%;"></div>
<svg class="b" style="left:2510.00px;top:1033.00px;" width="21.00" height="21.00" viewBox="0 0 21 21"><g fill="#64718d"><path d="M7 4.9 A3.9 3.6 0 0 1 14.8 4.9 Z"/><path d="M4 6.8 H17.8 V12 C17.8 16 15.6 18.8 12.3 18.8 V9.6 C12.3 8.8 11.7 8.4 10.9 8.4 C10.1 8.4 9.5 8.8 9.5 9.6 V18.8 C6.2 18.8 4 16 4 12 Z"/></g><g stroke="#64718d" stroke-width="1.5" fill="none" stroke-linecap="round"><path d="M2.2 5 L4.6 7.2 M19.5 5.2 L17.1 7.2 M1.4 12.6 H4 M17.8 12.6 H20.3 M5.2 16.6 L3.1 19.6 M16.4 16.6 L18.6 19.6"/></g></svg>
<div class="t" style="left:2541.00px;top:1030.85px;font-size:24.27px;color:#64718d;transform:scaleX(0.9434);transform-origin:0.00px 0;">Bug</div>
<svg class="b" style="left:2626.00px;top:1032.00px;" width="23.00" height="23.00" viewBox="0 0 23 23"><circle cx="11.5" cy="11.5" r="11.3" fill="#69758f"/><path d="M6.5 13.5 L11.5 8.5 L16.5 13.5" fill="none" stroke="#fff" stroke-width="2.4"/></svg>
<div class="t" style="left:2657.80px;top:1030.15px;font-size:25.10px;color:#64718d;transform:scaleX(0.9434);transform-origin:0.00px 0;">Major</div>
<div class="b" style="left:1163.00px;top:1161.50px;width:1574.50px;height:205.00px;box-shadow:inset 0 0 0 1.3px #c6cde5;border-radius:8px;background:#fff;"></div>
<div class="b" style="left:1185.00px;top:1187.50px;width:26.00px;height:25.00px;box-shadow:inset 0 0 0 1.6px #5062c8;border-radius:4px;"></div>
<div class="t" style="left:1236.70px;top:1186.92px;font-size:23.84px;font-weight:700;color:#5d6cd0;transform:scaleX(0.9434);transform-origin:0.00px 0;">'keyword' is missing in props validation</div>
<div class="b" style="left:2574.60px;top:1180.70px;width:142.40px;height:34.50px;background:#e8ebfc;border-radius:17px;"></div>
<div class="t" style="left:2589.00px;top:1187.49px;font-size:20.45px;font-weight:700;color:#5464cf;transform:scaleX(0.9434);transform-origin:0.00px 0;">Consistency</div>
<div class="b" style="left:1236.20px;top:1236.10px;width:144.50px;height:36.50px;background:#fdf6e2;box-shadow:inset 0 0 0 1.4px #f4d67c;border-radius:19px;"></div>
<div class="t" style="left:1250.70px;top:1245.58px;font-size:19.52px;font-weight:700;color:#7a5410;transform:scaleX(0.9434);transform-origin:0.00px 0;">Reliability</div>
<svg class="b" style="left:1346.20px;top:1245.26px;" width="20.00" height="20.00" viewBox="0 0 20 20"><circle cx="10" cy="10" r="10" fill="#f2b53d"/><path d="M5.5 8.5 L10 13 L14.5 8.5" fill="none" stroke="#fff" stroke-width="2.3"/></svg>
<div class="b" style="left:1394.70px;top:1236.10px;width:189.70px;height:36.50px;background:#fdf6e2;box-shadow:inset 0 0 0 1.4px #f4d67c;border-radius:19px;"></div>
<div class="t" style="left:1409.20px;top:1245.05px;font-size:20.15px;font-weight:700;color:#7a5410;transform:scaleX(0.9434);transform-origin:0.00px 0;">Maintainability</div>
<svg class="b" style="left:1549.90px;top:1245.26px;" width="20.00" height="20.00" viewBox="0 0 20 20"><circle cx="10" cy="10" r="10" fill="#f2b53d"/><path d="M5.5 8.5 L10 13 L14.5 8.5" fill="none" stroke="#fff" stroke-width="2.3"/></svg>
<div class="b" style="left:2617.00px;top:1235.90px;width:66.00px;height:37.20px;background:#eef1f8;border-radius:4px;"></div>
<div class="t" style="left:2624.00px;top:1240.92px;font-size:25.02px;color:#3e4459;transform:scaleX(0.9434);transform-origin:0.00px 0;">react</div>
<div class="b" style="left:2689.80px;top:1235.90px;width:27.20px;height:37.20px;background:#eef1f8;border-radius:4px;"></div>
<div class="t" style="left:2695.16px;top:1242.28px;font-size:24.00px;color:#3e4459;">+</div>
<div class="b" style="left:1236.50px;top:1293.00px;width:1480.50px;height:1.50px;background:#e1e6f3;"></div>
<svg class="b" style="left:1237.00px;top:1318.50px;" width="23.00" height="23.00" viewBox="0 0 23 23"><circle cx="11.5" cy="11.5" r="10" fill="none" stroke="#c8d0e2" stroke-width="2.2"/></svg>
<div class="t" style="left:1269.30px;top:1319.75px;font-size:23.80px;color:#2a2f40;transform:scaleX(0.9434);transform-origin:0.00px 0;">Open</div>
<svg class="b" style="left:1330.00px;top:1325.50px;" width="17.00" height="10.00" viewBox="0 0 17 10"><path d="M1.5 1.5 L8.5 8.5 L15.5 1.5" fill="none" stroke="#2a2f40" stroke-width="1.6"/></svg>
<svg class="b" style="left:1371.50px;top:1317.50px;" width="22.50" height="25.70" viewBox="0 0 35 40"><rect width="35" height="40" fill="#fdfdfd"/><path d="M4 40 Q6 37 11 36.5 L20 36.5 Q25 37 27 40 Z" fill="#222"/><rect x="10" y="31" width="11" height="6.5" fill="#c98f80"/><ellipse cx="15.5" cy="14" rx="14.5" ry="13.5" fill="#2b2428"/><ellipse cx="15.5" cy="23.5" rx="10.8" ry="12.8" fill="#dea391"/><path d="M4.5 21 C4 14 8 10.8 15.5 10.8 C23 10.8 27 14 26.5 21 C25 16 22 13.6 15.5 13.3 C9 13.6 6 16 4.5 21 Z" fill="#2b2428"/><rect x="8" y="19.8" width="5" height="2" rx="1" fill="#7b6650"/><rect x="18" y="19.8" width="5" height="2" rx="1" fill="#7b6650"/><path d="M12 30.3 q3.5 1.5 7 0" stroke="#a87468" stroke-width="1.5" fill="none"/><rect x="34" y="7" width="1" height="32" fill="#dcdcdc"/></svg>
<div class="t" style="left:1409.70px;top:1318.29px;font-size:25.53px;color:#5b6a8c;transform:scaleX(0.9434);transform-origin:0.00px 0;">stretchcloud</div>
<svg class="b" style="left:1552.00px;top:1327.50px;" width="17.00" height="10.00" viewBox="0 0 17 10"><path d="M1.5 1.5 L8.5 8.5 L15.5 1.5" fill="none" stroke="#5b6a8c" stroke-width="1.6"/></svg>
<div class="t" style="left:2028.40px;top:1319.35px;font-size:24.27px;color:#64718d;transform:scaleX(0.9434);transform-origin:0.00px 0;">L3</div>
<div class="t" style="left:2098.60px;top:1317.99px;font-size:25.89px;color:#64718d;transform:scaleX(0.9434);transform-origin:0.00px 0;">5min effort</div>
<div class="t" style="left:2256.70px;top:1319.34px;font-size:24.29px;color:#64718d;transform:scaleX(0.9434);transform-origin:0.00px 0;">1 month ago</div>
<div class="b" style="left:2073.40px;top:1327.00px;width:5.20px;height:5.20px;background:#c6d0e4;border-radius:50%;"></div>
<div class="b" style="left:2232.70px;top:1327.00px;width:5.20px;height:5.20px;background:#c6d0e4;border-radius:50%;"></div>
<div class="b" style="left:2404.60px;top:1327.00px;width:5.20px;height:5.20px;background:#c6d0e4;border-radius:50%;"></div>
<div class="b" style="left:2600.70px;top:1327.00px;width:5.20px;height:5.20px;background:#c6d0e4;border-radius:50%;"></div>
<svg class="b" style="left:2432.00px;top:1322.00px;" width="20.00" height="20.00" viewBox="0 0 20 20"><circle cx="10" cy="10" r="8.8" fill="none" stroke="#64718d" stroke-width="1.8"/><path d="M10 10.3 L5.3 2.9 A8.5 8.5 0 0 1 14.7 2.9Z M10 10.3 L18.5 10.3 A8.5 8.5 0 0 1 14.2 17.6Z M10 10.3 L5.8 17.6 A8.5 8.5 0 0 1 1.5 10.3Z" fill="#64718d"/></svg>
<div class="t" style="left:2461.50px;top:1319.35px;font-size:24.27px;color:#64718d;transform:scaleX(0.9434);transform-origin:0.00px 0;">Code Smell</div>
<svg class="b" style="left:2626.00px;top:1319.50px;" width="23.00" height="23.00" viewBox="0 0 23 23"><circle cx="11.5" cy="11.5" r="11.3" fill="#69758f"/><path d="M6.5 13.5 L11.5 8.5 L16.5 13.5" fill="none" stroke="#fff" stroke-width="2.4"/></svg>
<div class="t" style="left:2657.80px;top:1318.65px;font-size:25.10px;color:#64718d;transform:scaleX(0.9434);transform-origin:0.00px 0;">Major</div>
<div class="b" style="left:1163.00px;top:1392.00px;width:1574.50px;height:205.00px;box-shadow:inset 0 0 0 1.3px #c6cde5;border-radius:8px;background:#fff;"></div>
<div class="b" style="left:1185.00px;top:1418.40px;width:26.00px;height:25.00px;box-shadow:inset 0 0 0 1.6px #5062c8;border-radius:4px;"></div>
<div class="t" style="left:1236.70px;top:1417.32px;font-size:23.96px;font-weight:700;color:#5d6cd0;transform:scaleX(0.9434);transform-origin:0.00px 0;">Refactor this function to reduce its Cognitive Complexity from 23 to the 15 allowed.</div>
<div class="b" style="left:2580.00px;top:1411.80px;width:137.00px;height:34.50px;background:#e8ebfc;border-radius:17px;"></div>
<div class="t" style="left:2593.40px;top:1419.31px;font-size:20.42px;font-weight:700;color:#5464cf;transform:scaleX(0.9434);transform-origin:0.00px 0;">Adaptability</div>
<div class="b" style="left:376.00px;top:80.00px;width:120.00px;height:154.00px;background:radial-gradient(ellipse 110px 200px at 0% 100%,rgba(0,0,30,0.07),rgba(0,0,30,0.025) 50%,rgba(0,0,0,0) 100%);"></div>
<div class="b" style="left:376.00px;top:234.00px;width:95.00px;height:1215.00px;background:linear-gradient(to right,rgba(0,0,30,0.09) 0px,rgba(0,0,30,0.04) 20px,rgba(0,0,30,0.015) 55px,rgba(0,0,0,0) 95px);"></div>
<div class="b" style="left:376.00px;top:1390.00px;width:2495.00px;height:59.00px;background:linear-gradient(to bottom,rgba(0,0,0,0),rgba(0,0,0,0.07));-webkit-mask-image:linear-gradient(to right,#000 0,#000 75%,rgba(0,0,0,0.15) 95%,rgba(0,0,0,0.1) 100%);mask-image:linear-gradient(to right,#000 0,#000 75%,rgba(0,0,0,0.15) 95%,rgba(0,0,0,0.1) 100%);"></div>
<div class="b" style="left:2789.00px;top:1273.00px;width:80.00px;height:80.00px;background:#6aa9e3;border-radius:15px;box-shadow:0 4px 10px rgba(0,0,0,0.22);"></div>
<svg class="b" style="left:2789.00px;top:1273.00px;" width="80.00" height="80.00" viewBox="0 0 80 80"><path d="M39.3 9.9 C33 14.5 24 18.2 16 20.1 C16 45 22 58 39.3 68.2 C56.6 58 62.9 45 62.9 20.1 C54.6 18.2 45.6 14.5 39.3 9.9 Z" fill="#fff"/><path d="M31.8 38.5 L38.5 45.2 L48.3 32.6" fill="none" stroke="#6aa9e3" stroke-width="2.1"/></svg>
<svg class="b" style="left:0.00px;top:1436.00px;" width="14.00" height="13.00" viewBox="0 0 14 13"><path d="M0 0 C0 8 5 13 14 13 L0 13Z" fill="#c8c8cc"/></svg>
<svg class="b" style="left:2857.00px;top:1435.00px;" width="14.00" height="14.00" viewBox="0 0 14 14"><path d="M14 0 C14 8 8 14 0 14 L14 14Z" fill="#3b3a2c"/></svg>
</body></html>
